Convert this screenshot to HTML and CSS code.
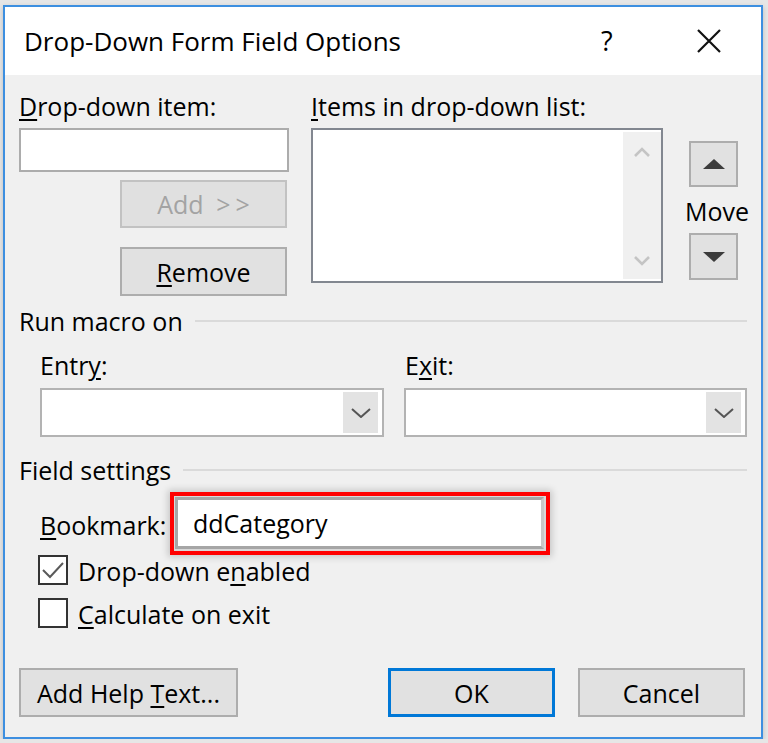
FILE: index.html
```html
<!DOCTYPE html>
<html>
<head>
<meta charset="utf-8">
<link rel="stylesheet" href="styles.css">
</head>
<body>
<div class="window">
  <div class="titlebar">
    <div class="title">Drop-Down Form Field Options</div>
    <div class="help">?</div>
    <div class="close">
      <svg width="24" height="24" viewBox="0 0 24 24"><path d="M1 1 L23 23 M23 1 L1 23" stroke="#111" stroke-width="2.2" fill="none"/></svg>
    </div>
  </div>
  <div class="content">
    <div class="top">
      <div class="col-item">
        <div class="label"><u>D</u>rop-down item:</div>
        <div class="textbox"></div>
        <div class="btn btn-add"><span>Add <span class="arrows">&gt;&gt;</span></span></div>
        <div class="btn btn-remove"><span><u>R</u>emove</span></div>
      </div>
      <div class="col-list">
        <div class="label"><u>I</u>tems in drop-down list:</div>
        <div class="listbox">
          <div class="list-area"></div>
          <div class="scrollbar">
            <svg width="18" height="12" viewBox="0 0 18 12"><path d="M2 10 L9 3 L16 10" stroke="#c4c4c4" stroke-width="2.6" fill="none"/></svg>
            <svg width="18" height="12" viewBox="0 0 18 12"><path d="M2 2 L9 9 L16 2" stroke="#c4c4c4" stroke-width="2.6" fill="none"/></svg>
          </div>
        </div>
      </div>
      <div class="col-move">
        <div class="btn move-btn up">
          <svg width="22" height="10" viewBox="0 0 22 10"><path d="M0 10 L11 0 L22 10 Z" fill="#3c3c3c"/></svg>
        </div>
        <div class="move-label">Move</div>
        <div class="btn move-btn down">
          <svg width="22" height="10" viewBox="0 0 22 10"><path d="M0 0 L22 0 L11 10 Z" fill="#3c3c3c"/></svg>
        </div>
      </div>
    </div>

    <div class="group-head macro-head"><span>Run macro on</span><div class="rule"></div></div>
    <div class="macro-row">
      <div class="macro-field entry">
        <div class="label">Entr<u>y</u>:</div>
        <div class="combo">
          <div class="drop">
            <svg width="20" height="10" viewBox="0 0 20 10"><path d="M1 1 L10 9 L19 1" stroke="#555" stroke-width="2" fill="none"/></svg>
          </div>
        </div>
      </div>
      <div class="macro-field exit">
        <div class="label exit-label">E<u>x</u>it:</div>
        <div class="combo">
          <div class="drop">
            <svg width="20" height="10" viewBox="0 0 20 10"><path d="M1 1 L10 9 L19 1" stroke="#555" stroke-width="2" fill="none"/></svg>
          </div>
        </div>
      </div>
    </div>

    <div class="group-head settings-head"><span>Field settings</span><div class="rule"></div></div>
    <div class="bookmark-row">
      <div class="label bm-label"><u>B</u>ookmark:</div>
      <div class="highlight">
        <div class="bm-input">ddCategory</div>
      </div>
    </div>
    <div class="check-row first">
      <div class="checkbox">
        <svg width="26" height="26" viewBox="0 0 26 26"><path d="M3 13 L10 20 L23 6" stroke="#5a5a5a" stroke-width="2" fill="none"/></svg>
      </div>
      <span class="check-text">Drop-down e<u>n</u>abled</span>
    </div>
    <div class="check-row second">
      <div class="checkbox"></div>
      <span class="check-text"><u>C</u>alculate on exit</span>
    </div>

    <div class="footer">
      <div class="btn help-btn"><span>Add Help <u>T</u>ext...</span></div>
      <div class="btn ok-btn"><span>OK</span></div>
      <div class="btn cancel-btn"><span>Cancel</span></div>
    </div>
  </div>
</div>
</body>
</html>
```

FILE: styles.css
```css
* { box-sizing: border-box; }

body {
  margin: 0;
  background: #e6e6e6;
  font-family: "Open Sans", "Noto Sans", sans-serif;
  color: #000;
}

u {
  text-decoration: underline;
  text-decoration-thickness: 2px;
  text-underline-offset: 3px;
}

.window {
  margin: 5px 0 0 3px;
  width: 760px;
  border: 2px solid #3d8fe0;
  background: #f0f0f0;
  box-shadow: 0 2px 5px rgba(0, 0, 0, 0.18);
}

.titlebar {
  height: 68px;
  background: #fff;
  display: flex;
  align-items: center;
  padding-left: 19px;
}

.title {
  flex: 1;
  font-size: 26px;
  line-height: 30px;
}

.help {
  font-size: 27px;
  line-height: 30px;
  width: 14px;
}

.close {
  margin-left: 82px;
  margin-right: 40px;
  width: 24px;
  height: 24px;
  display: flex;
}

.content {
  padding: 0 14px 20px 14px;
}

.label {
  font-size: 25px;
  line-height: 28px;
  height: 28px;
  white-space: nowrap;
}

.btn {
  border: 2px solid #adadad;
  background: #e1e1e1;
  display: flex;
  align-items: center;
  justify-content: center;
  font-size: 25px;
  line-height: 28px;
  white-space: nowrap;
}

/* top section */
.top {
  display: flex;
  padding-top: 17px;
}

.col-item {
  width: 270px;
  display: flex;
  flex-direction: column;
}

.textbox {
  margin-top: 8px;
  height: 44px;
  border: 2px solid #acacac;
  background: #fff;
}

.btn-add {
  margin-top: 8px;
  margin-left: 101px;
  width: 167px;
  height: 48px;
  color: #a3a3a3;
  border-color: #c2c2c2;
  background: #e0e0e0;
}

.btn-add .arrows {
  letter-spacing: 5px;
  margin-left: 6px;
  margin-right: -5px;
}

.btn-remove {
  margin-top: 19px;
  margin-left: 101px;
  width: 167px;
  height: 49px;
}

.col-list {
  width: 352px;
  margin-left: 22px;
}

.listbox {
  margin-top: 8px;
  height: 155px;
  border: 2px solid #828790;
  background: #fff;
  display: flex;
  padding: 2px 0 2px 0;
}

.list-area {
  flex: 1;
  background: #fff;
}

.scrollbar {
  width: 38px;
  background: #f0f0f0;
  display: flex;
  flex-direction: column;
  justify-content: space-between;
  align-items: center;
  padding: 14px 0 12px 0;
}

.col-move {
  width: 62px;
  margin-left: 22px;
  display: flex;
  flex-direction: column;
  padding-top: 49px;
}

.move-btn {
  width: 49px;
  margin-left: 4px;
}

.move-btn.up { height: 46px; }
.move-btn.down { height: 47px; margin-top: 8px; }

.move-label {
  margin-top: 10px;
  font-size: 25px;
  line-height: 28px;
  white-space: nowrap;
}

/* group headings */
.group-head {
  display: flex;
  align-items: center;
  font-size: 25px;
  line-height: 28px;
}

.group-head .rule {
  flex: 1;
  height: 2px;
  background: #dadada;
}

.macro-head { margin-top: 11px; }
.macro-head .rule { margin-left: 12px; }

.settings-head { margin-top: 19px; }
.settings-head .rule { margin-left: 12px; }

/* macro row */
.macro-row {
  display: flex;
  padding-left: 21px;
  margin-top: 16px;
}

.macro-field.entry { width: 344px; }
.macro-field.exit { width: 343px; margin-left: 20px; }

.exit-label { padding-left: 1px; }

.combo {
  margin-top: 9px;
  height: 49px;
  border: 2px solid #b3b3b3;
  background: #fff;
  display: flex;
  justify-content: flex-end;
  padding: 2px 4px 2px 2px;
}

.drop {
  width: 35px;
  background: #e3e3e3;
  display: flex;
  align-items: center;
  justify-content: center;
}

/* bookmark */
.bookmark-row {
  display: flex;
  align-items: center;
  padding-left: 21px;
  margin-top: 8px;
}

.bm-label {
  width: 130px;
  margin-top: 2px;
}

.highlight {
  width: 380px;
  height: 63px;
  border: 4px solid #ff0000;
  background: #d8d8d8;
  padding: 1px 2px 2px 1px;
  box-shadow: 0 0 7px 2px rgba(0, 0, 0, 0.18);
}

.bm-input {
  height: 100%;
  border: 3px solid #a6a6a6;
  border-right-color: #c8c8c8;
  background: #fff;
  font-size: 25px;
  line-height: 28px;
  padding-left: 15px;
  display: flex;
  align-items: center;
}

/* checkboxes */
.check-row {
  display: flex;
  align-items: center;
  padding-left: 19px;
}

.check-row.second { margin-top: 13px; }

.checkbox {
  width: 30px;
  height: 30px;
  border: 2px solid #333;
  background: #fff;
  display: flex;
}

.check-text {
  margin-left: 10px;
  font-size: 25px;
  line-height: 28px;
  margin-top: 2px;
}

/* footer */
.footer {
  display: flex;
  margin-top: 40px;
}

.help-btn {
  width: 219px;
  height: 49px;
}

.ok-btn {
  margin-left: auto;
  width: 167px;
  height: 49px;
  border: 3px solid #0078d7;
}

.cancel-btn {
  margin-left: 23px;
  margin-right: 2px;
  width: 167px;
  height: 49px;
}
```
